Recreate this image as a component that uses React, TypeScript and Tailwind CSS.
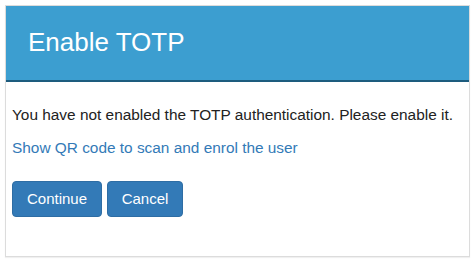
import React from "react";

export default function App() {
  return (
    <div className="w-[474px] h-[262px] bg-white pt-[5px] pl-[5px]" style={{ fontFamily: '"Liberation Sans", Arial, sans-serif' }}>
      <div className="w-[465px] h-[252px] border border-[#dcdcdc] shadow-[0_1px_1px_rgba(0,0,0,0.06)] bg-white flex flex-col">
        <div className="h-[76px] bg-[#3c9ed0] border-b-2 border-[#1d5c7e] flex items-center pl-[22px] pb-[2px]">
          <h1 className="text-white text-[26px] leading-none">Enable TOTP</h1>
        </div>
        <div className="px-[6px] pt-[23px] text-[15.4px] leading-[20px]">
          <p className="text-[#222]">You have not enabled the TOTP authentication. Please enable it.</p>
          <a className="block mt-[13px] text-[#337ab7]">Show QR code to scan and enrol the user</a>
          <div className="flex gap-[5px] mt-[23px]">
            <button className="w-[90px] h-[36px] rounded-[4px] bg-[#337ab7] border border-[#2e6da4] text-white text-[15px]">Continue</button>
            <button className="w-[76px] h-[36px] rounded-[4px] bg-[#337ab7] border border-[#2e6da4] text-white text-[15px]">Cancel</button>
          </div>
        </div>
      </div>
    </div>
  );
}
